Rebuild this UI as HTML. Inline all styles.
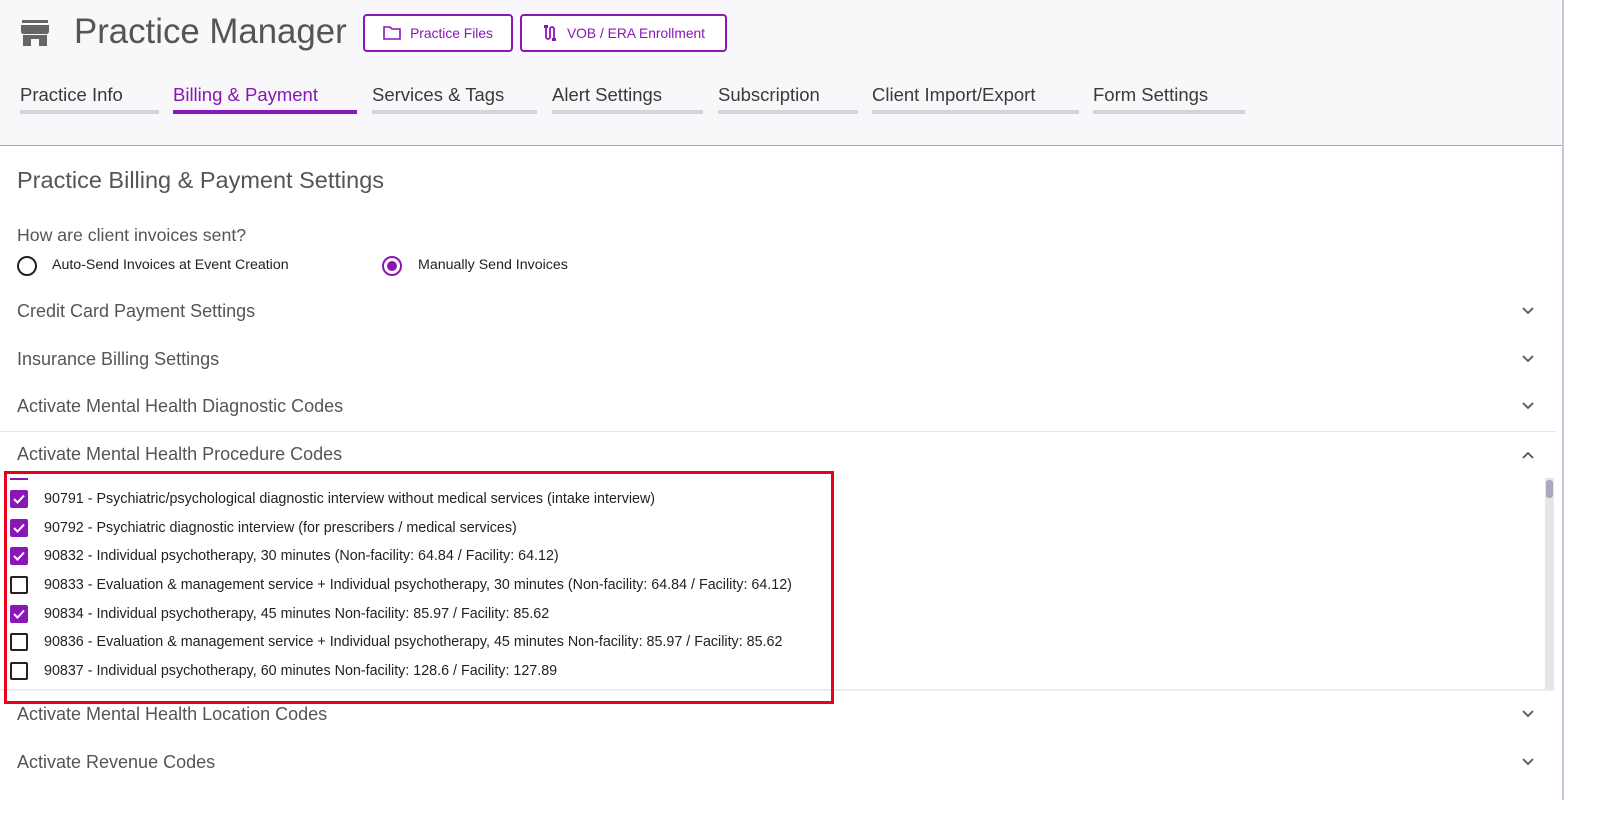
<!DOCTYPE html>
<html><head><style>
*{box-sizing:border-box;margin:0;padding:0}
body{width:1600px;height:831px;background:#fff;font-family:"Liberation Sans",sans-serif;position:relative;overflow:hidden;color:#333}
.hdr{position:absolute;left:0;top:0;width:1562px;height:146px;background:#f8f7fa;border-bottom:1px solid #a9a9a9}
.vline{position:absolute;left:1562px;top:0;width:2px;height:800px;background:#c9c6db}
.abs{position:absolute;white-space:nowrap}
.btn{position:absolute;top:14px;height:38px;border:2px solid #8a16b8;border-radius:4px;background:#fff;color:#8a16b8;font-size:13.8px;display:flex;align-items:center;justify-content:center;gap:9px}
.tab{position:absolute;top:84px;font-size:18.5px;color:#3a3a3a;height:30px;border-bottom:4px solid #d6d3db;white-space:nowrap}
.tab.on{color:#8a16b8;border-bottom-color:#8a16b8}
.sec{position:absolute;left:17px;font-size:18px;color:#555;white-space:nowrap}
.chev{position:absolute;left:1521px;width:14px;height:10px}
.row{position:absolute;left:10px;height:20px;display:flex;align-items:center;font-size:14.3px;color:#222;white-space:nowrap}
.cb{width:18px;height:18px;border:2px solid #222;border-radius:2px;margin-right:16px;background:#fff;display:flex;align-items:center;justify-content:center;flex:none}
.cb.on{background:#8a16b8;border-color:#8a16b8}
</style></head><body>
<div class="hdr"></div>
<div class="vline"></div>
<svg class="abs" style="left:21px;top:20px" width="28" height="26" viewBox="0 0 28 26"><rect x="1" y="0" width="26" height="3" fill="#666"/><path d="M0 5h28v6c0 2-1 3-3 3H3c-2 0-3-1-3-3z" fill="#666"/><path d="M2 15h24v11H18v-7h-8v7H2z" fill="#666"/></svg>
<div class="abs" style="left:74px;top:12px;font-size:34.8px;color:#555">Practice Manager</div>
<div class="btn" style="left:363px;width:150px"><svg width="18" height="14" viewBox="0 0 18 14"><path d="M1 1h6l2 2h8v10H1z" fill="none" stroke="#8a16b8" stroke-width="1.6"/></svg>Practice Files</div>
<div class="btn" style="left:520px;width:207px"><svg width="16" height="18" viewBox="0 0 16 18"><path d="M4 1v12a2 2 0 0 0 4 0V5a2 2 0 0 1 4 0v12" fill="none" stroke="#8a16b8" stroke-width="1.8"/><rect x="2" y="1" width="4" height="3" fill="#8a16b8"/><rect x="10" y="14" width="4" height="3" fill="#8a16b8"/></svg>VOB / ERA Enrollment</div>
<div class="tab" style="left:20px;width:139px">Practice Info</div>
<div class="tab on" style="left:173px;width:184px">Billing &amp; Payment</div>
<div class="tab" style="left:372px;width:165px">Services &amp; Tags</div>
<div class="tab" style="left:552px;width:151px">Alert Settings</div>
<div class="tab" style="left:718px;width:140px">Subscription</div>
<div class="tab" style="left:872px;width:207px">Client Import/Export</div>
<div class="tab" style="left:1093px;width:152px">Form Settings</div>

<div class="abs" style="left:17px;top:167px;font-size:23.5px;color:#555">Practice Billing &amp; Payment Settings</div>
<div class="abs" style="left:17px;top:225px;font-size:17.7px;color:#555">How are client invoices sent?</div>
<div class="abs" style="left:17px;top:256px;width:20px;height:20px;border:2px solid #222;border-radius:50%"></div>
<div class="abs" style="left:52px;top:257px;font-size:14.2px;color:#222">Auto-Send Invoices at Event Creation</div>
<div class="abs" style="left:382px;top:256px;width:20px;height:20px;border:2px solid #8a16b8;border-radius:50%"><div style="margin:3px;width:10px;height:10px;border-radius:50%;background:#8a16b8"></div></div>
<div class="abs" style="left:418px;top:257px;font-size:14.2px;color:#222">Manually Send Invoices</div>

<div class="sec" style="top:301px">Credit Card Payment Settings</div>
<div class="sec" style="top:349px">Insurance Billing Settings</div>
<div class="sec" style="top:396px">Activate Mental Health Diagnostic Codes</div>
<div class="abs" style="left:0;top:431px;width:1555px;height:1px;background:#e3e3e3"></div>
<div class="sec" style="top:444px">Activate Mental Health Procedure Codes</div>
<div class="sec" style="top:704px">Activate Mental Health Location Codes</div>
<div class="sec" style="top:752px">Activate Revenue Codes</div>
<svg class="chev" style="top:306px" viewBox="0 0 14 10"><path d="M2 2l5 5 5-5" fill="none" stroke="#555" stroke-width="1.8"/></svg>
<svg class="chev" style="top:354px" viewBox="0 0 14 10"><path d="M2 2l5 5 5-5" fill="none" stroke="#555" stroke-width="1.8"/></svg>
<svg class="chev" style="top:401px" viewBox="0 0 14 10"><path d="M2 2l5 5 5-5" fill="none" stroke="#555" stroke-width="1.8"/></svg>
<svg class="chev" style="top:450px" viewBox="0 0 14 10"><path d="M2 8l5-5 5 5" fill="none" stroke="#555" stroke-width="1.8"/></svg>
<svg class="chev" style="top:709px" viewBox="0 0 14 10"><path d="M2 2l5 5 5-5" fill="none" stroke="#555" stroke-width="1.8"/></svg>
<svg class="chev" style="top:757px" viewBox="0 0 14 10"><path d="M2 2l5 5 5-5" fill="none" stroke="#555" stroke-width="1.8"/></svg>

<div class="abs" style="left:1545px;top:478px;width:9px;height:212px;background:#e6e6e6"></div>
<div class="abs" style="left:1546px;top:480px;width:7px;height:18px;background:#a9a9bd;border-radius:3px"></div>
<div class="abs" style="left:0;top:689px;width:1555px;height:2px;background:#ececec"></div>

<div class="abs" style="left:10px;top:478px;width:18px;height:2px;background:#8a16b8"></div>
<div class="row" style="top:489px"><div class="cb on"><svg width="12" height="10" viewBox="0 0 12 10"><path d="M1 5l3.5 3.5L11 1.5" fill="none" stroke="#fff" stroke-width="2"/></svg></div>90791 - Psychiatric/psychological diagnostic interview without medical services (intake interview)</div>
<div class="row" style="top:518px"><div class="cb on"><svg width="12" height="10" viewBox="0 0 12 10"><path d="M1 5l3.5 3.5L11 1.5" fill="none" stroke="#fff" stroke-width="2"/></svg></div>90792 - Psychiatric diagnostic interview (for prescribers / medical services)</div>
<div class="row" style="top:546px"><div class="cb on"><svg width="12" height="10" viewBox="0 0 12 10"><path d="M1 5l3.5 3.5L11 1.5" fill="none" stroke="#fff" stroke-width="2"/></svg></div>90832 - Individual psychotherapy, 30 minutes (Non-facility: 64.84 / Facility: 64.12)</div>
<div class="row" style="top:575px"><div class="cb"></div>90833 - Evaluation &amp; management service + Individual psychotherapy, 30 minutes (Non-facility: 64.84 / Facility: 64.12)</div>
<div class="row" style="top:604px"><div class="cb on"><svg width="12" height="10" viewBox="0 0 12 10"><path d="M1 5l3.5 3.5L11 1.5" fill="none" stroke="#fff" stroke-width="2"/></svg></div>90834 - Individual psychotherapy, 45 minutes Non-facility: 85.97 / Facility: 85.62</div>
<div class="row" style="top:632px"><div class="cb"></div>90836 - Evaluation &amp; management service + Individual psychotherapy, 45 minutes Non-facility: 85.97 / Facility: 85.62</div>
<div class="row" style="top:661px"><div class="cb"></div>90837 - Individual psychotherapy, 60 minutes Non-facility: 128.6 / Facility: 127.89</div>

<div class="abs" style="left:4px;top:471px;width:830px;height:233px;border:3px solid #e8001c"></div>
</body></html>
